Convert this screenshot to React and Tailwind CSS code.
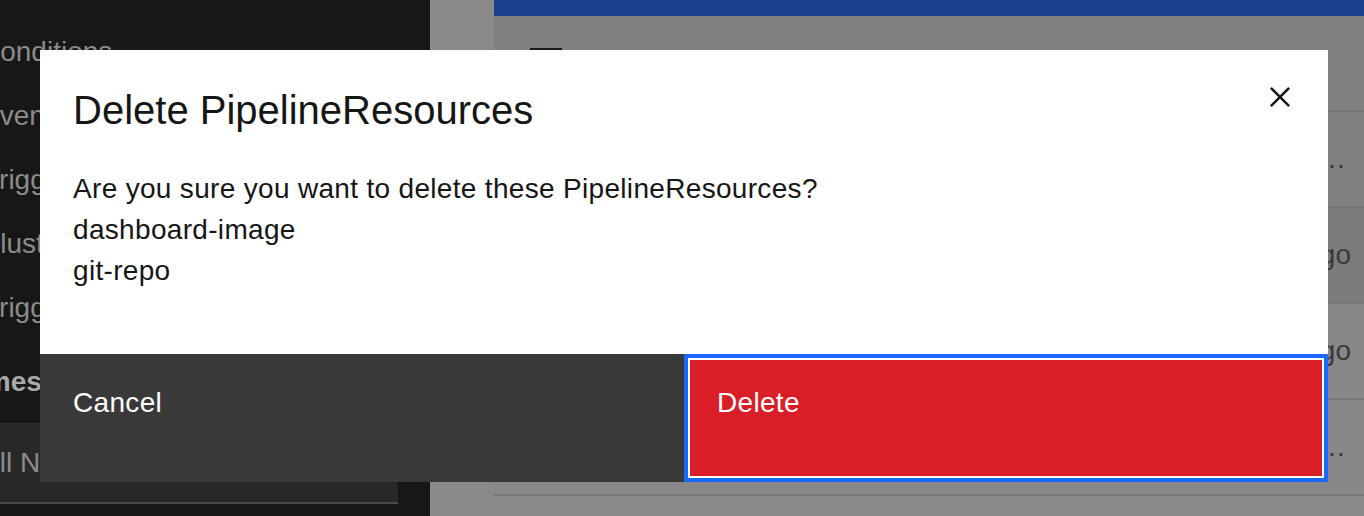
import React from "react";

const font = { fontFamily: '"Liberation Sans", Arial, sans-serif' };

function SideItem({ children, ml = "-ml-[20px]" }) {
  return (
    <div className="h-[64px] flex items-center whitespace-nowrap">
      <span className={`${ml} text-[28px] leading-[36px] text-[#8b8b8b]`}>{children}</span>
    </div>
  );
}

function Row({ text, pr, bg = "bg-[#888888]" }) {
  return (
    <div className={`h-[96px] ${bg} border-b-2 border-[#777777] flex items-center justify-end whitespace-nowrap`}>
      <span className={`text-[28px] leading-[36px] text-[#3a3a3a] ${pr}`}>{text}</span>
    </div>
  );
}

export default function App() {
  return (
    <div className="relative w-[1364px] h-[516px] overflow-hidden" style={font}>
      {/* background page (under overlay) */}
      <div className="flex h-full">
        {/* side nav */}
        <div className="w-[430px] h-full bg-[#171717] flex flex-col overflow-hidden">
          <div className="pt-[20px]">
            <SideItem>Conditions</SideItem>
            <SideItem ml="-ml-[19px]">EventListeners</SideItem>
            <SideItem ml="-ml-[17px]">TriggerBindings</SideItem>
            <SideItem>ClusterTriggerBindings</SideItem>
            <SideItem ml="-ml-[17px]">TriggerTemplates</SideItem>
          </div>
          <div className="h-[83px] flex items-center whitespace-nowrap">
            <span className="-ml-[50px] text-[28px] leading-[36px] font-bold text-[#a9a9a9]">Namespaces</span>
          </div>
          <div className="w-[398px] h-[81px] bg-[#282828] border-b-2 border-[#4a4a4a] flex items-center whitespace-nowrap">
            <span className="-ml-[19px] text-[28px] leading-[36px] text-[#8b8b8b]">All Namespaces</span>
          </div>
        </div>
        {/* gutter */}
        <div className="w-[64px] h-full bg-[#8a8a8a]" />
        {/* main */}
        <div className="flex-1 h-full bg-[#808080] flex flex-col">
          <div className="h-[16px] bg-[#1b3f8a]" />
          <div className="relative h-[96px] border-b-2 border-[#777777]">
            <div className="absolute left-[36px] top-[32px] w-[32px] h-[32px] bg-[#1a1a1a]" />
          </div>
          <Row text="dashboard-image-…" pr="pr-[18px]" bg="bg-[#808080]" />
          <Row text="2 days ago" pr="pr-[13px]" bg="bg-[#7c7c7c]" />
          <Row text="2 days ago" pr="pr-[13px]" bg="bg-[#888888]" />
          <Row text="git-repo-…" pr="pr-[18px]" bg="bg-[#888888]" />
          <div className="flex-1 bg-[#8a8a8a]" />
        </div>
      </div>

      {/* modal */}
      <div className="absolute left-[40px] top-[50px] w-[1288px] h-[432px] bg-white flex flex-col">
        <div className="relative pl-[33px] pt-[32px]">
          <h2 className="text-[40px] leading-[56px] text-[#161616] font-normal">Delete PipelineResources</h2>
          <button className="absolute right-[28px] top-[27px] w-[40px] h-[40px] flex items-center justify-center" aria-label="Close">
            <svg width="40" height="40" viewBox="0 0 32 32" fill="#161616">
              <path d="M24 9.4L22.6 8 16 14.6 9.4 8 8 9.4 14.6 16 8 22.6 9.4 24 16 17.4 22.6 24 24 22.6 17.4 16 24 9.4z" />
            </svg>
          </button>
        </div>
        <div className="flex-1 pl-[33px] pt-[30px] text-[28px] leading-[41px] tracking-[0.32px] text-[#161616]">
          <p>Are you sure you want to delete these PipelineResources?</p>
          <p>dashboard-image</p>
          <p>git-repo</p>
        </div>
        <div className="grid grid-cols-2 h-[128px]">
          <button className="bg-[#393939] text-white text-left pl-[33px] pt-[31px] flex items-start text-[28px] leading-[36px] tracking-[0.32px]">
            Cancel
          </button>
          <button className="bg-[#da1e28] text-white text-left pl-[33px] pt-[31px] flex items-start text-[28px] leading-[36px] tracking-[0.32px] shadow-[inset_0_0_0_4px_#1c68ff,inset_0_0_0_6px_#ffffff]">
            Delete
          </button>
        </div>
      </div>
    </div>
  );
}
